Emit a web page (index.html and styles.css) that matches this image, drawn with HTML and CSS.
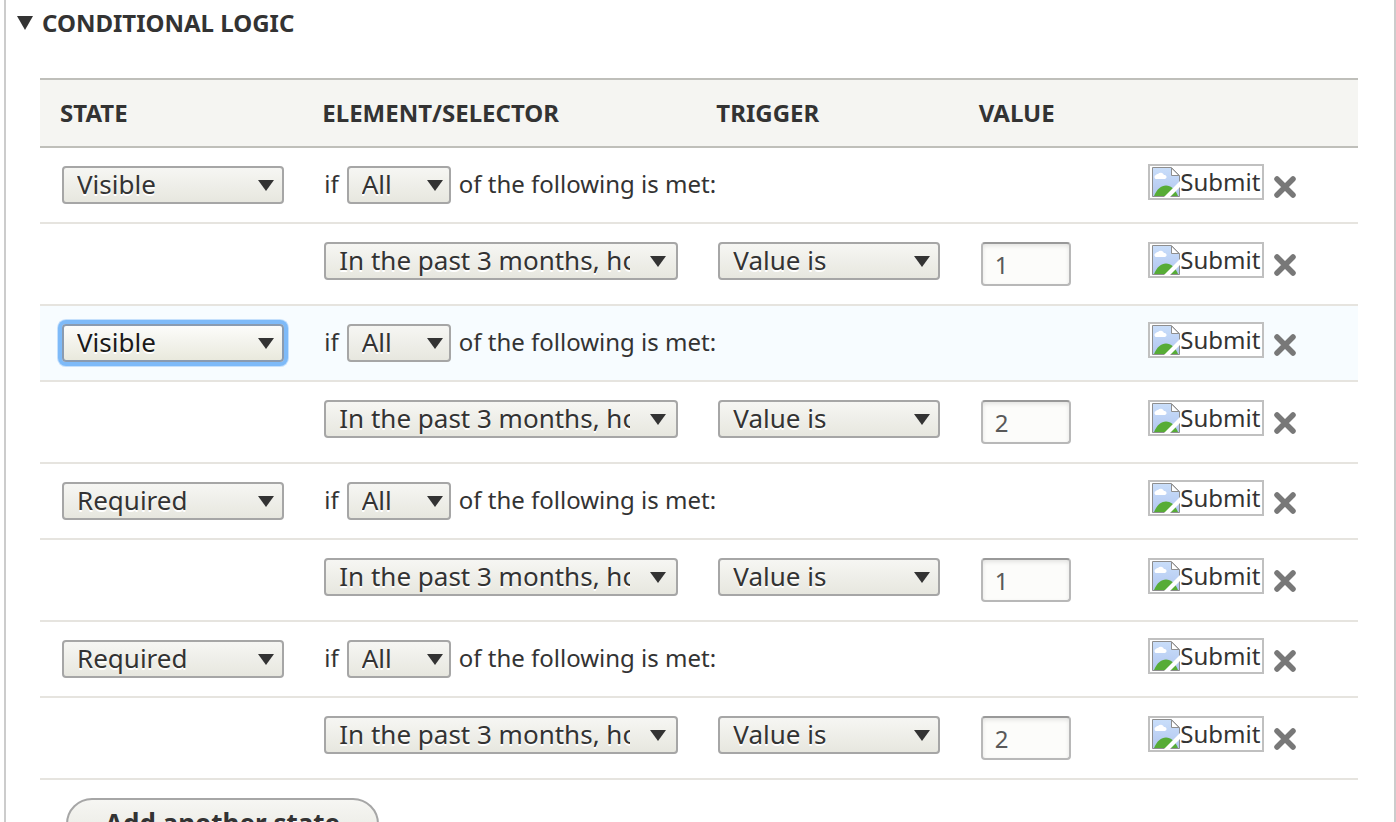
FILE: index.html
```
<!DOCTYPE html>
<html lang="en">
<head>
    <meta charset="utf-8">
    <title>Conditional logic</title>
    <link rel="stylesheet" href="styles.css">
</head>
<body>

    <!-- Shared icons -->
    <svg class="icon_defs" aria-hidden="true">
        <symbol id="broken" viewBox="0 0 28 30">
            <defs>
                <linearGradient id="sky" x1="0" y1="0" x2="0" y2="1">
                    <stop offset="0" stop-color="#c9defa"/>
                    <stop offset="1" stop-color="#b2c6ef"/>
                </linearGradient>
            </defs>
            <path d="M.5 .5H19.500L27.500 8.500V29.500H.5Z" fill="url(#sky)" stroke="#8e8e8e"/>
            <path d="M5 12a2 2 0 0 1-1-4a2 2 0 0 1 2-1a3.500 3.500 0 0 1 6 1a2 2 0 0 1 1 4Z" fill="#fff"/>
            <path d="M2 29C5 22 9 18.500 14 18.500C19 18.500 23 22 26 29Z" fill="#57ac36"/>
            <path d="M19.500 1V8.500H27Z" fill="#fff" stroke="#8e8e8e"/>
            <path d="M28 14V20L18 30H12Z" fill="#fff"/>
        </symbol>
        <symbol id="cross" viewBox="0 0 24 24">
            <path d="M4 4L20 20M20 4L4 20" stroke="#787878" stroke-width="5.500" stroke-linecap="round"/>
        </symbol>
    </svg>

    <details class="fieldset" open>
        <summary>
            <svg class="arrow" width="16" height="14" viewBox="0 0 16 14"><path d="M0 0H16L8 14Z" fill="#333"/></svg>
            Conditional logic
        </summary>

        <table class="states">
            <colgroup>
                <col class="col_state">
                <col class="col_selector">
                <col class="col_trigger">
                <col class="col_value">
                <col>
            </colgroup>
            <thead>
                <tr>
                    <th>State</th>
                    <th>Element/Selector</th>
                    <th>Trigger</th>
                    <th>Value</th>
                    <td></td>
                </tr>
            </thead>
            <tbody>
                <tr class="state">
                    <td><select class="medium" aria-label="State"><option>Visible</option><option>Required</option></select></td>
                    <td colspan="3">
                        <label class="operator">if <select class="small"><option>All</option><option>Any</option></select> of the following is met:</label>
                    </td>
                    <td class="ops">
                        <div class="buttons">
                            <button class="add"><svg width="28" height="30"><use href="#broken"/></svg>Submit</button>
                            <button class="remove" aria-label="Remove"><svg width="24" height="24"><use href="#cross"/></svg></button>
                        </div>
                    </td>
                </tr>
                <tr class="condition">
                    <td></td>
                    <td><select class="large" aria-label="Element"><option>In the past 3 months, how often</option></select></td>
                    <td><select class="medium" aria-label="Trigger"><option>Value is</option></select></td>
                    <td><input class="value" type="text" value="1" aria-label="Value"></td>
                    <td class="ops">
                        <div class="buttons">
                            <button class="add"><svg width="28" height="30"><use href="#broken"/></svg>Submit</button>
                            <button class="remove" aria-label="Remove"><svg width="24" height="24"><use href="#cross"/></svg></button>
                        </div>
                    </td>
                </tr>
                <tr class="state active">
                    <td><select class="medium focused" aria-label="State"><option>Visible</option><option>Required</option></select></td>
                    <td colspan="3">
                        <label class="operator">if <select class="small"><option>All</option><option>Any</option></select> of the following is met:</label>
                    </td>
                    <td class="ops">
                        <div class="buttons">
                            <button class="add"><svg width="28" height="30"><use href="#broken"/></svg>Submit</button>
                            <button class="remove" aria-label="Remove"><svg width="24" height="24"><use href="#cross"/></svg></button>
                        </div>
                    </td>
                </tr>
                <tr class="condition">
                    <td></td>
                    <td><select class="large" aria-label="Element"><option>In the past 3 months, how often</option></select></td>
                    <td><select class="medium" aria-label="Trigger"><option>Value is</option></select></td>
                    <td><input class="value" type="text" value="2" aria-label="Value"></td>
                    <td class="ops">
                        <div class="buttons">
                            <button class="add"><svg width="28" height="30"><use href="#broken"/></svg>Submit</button>
                            <button class="remove" aria-label="Remove"><svg width="24" height="24"><use href="#cross"/></svg></button>
                        </div>
                    </td>
                </tr>
                <tr class="state">
                    <td><select class="medium" aria-label="State"><option>Required</option><option>Visible</option></select></td>
                    <td colspan="3">
                        <label class="operator">if <select class="small"><option>All</option><option>Any</option></select> of the following is met:</label>
                    </td>
                    <td class="ops">
                        <div class="buttons">
                            <button class="add"><svg width="28" height="30"><use href="#broken"/></svg>Submit</button>
                            <button class="remove" aria-label="Remove"><svg width="24" height="24"><use href="#cross"/></svg></button>
                        </div>
                    </td>
                </tr>
                <tr class="condition">
                    <td></td>
                    <td><select class="large" aria-label="Element"><option>In the past 3 months, how often</option></select></td>
                    <td><select class="medium" aria-label="Trigger"><option>Value is</option></select></td>
                    <td><input class="value" type="text" value="1" aria-label="Value"></td>
                    <td class="ops">
                        <div class="buttons">
                            <button class="add"><svg width="28" height="30"><use href="#broken"/></svg>Submit</button>
                            <button class="remove" aria-label="Remove"><svg width="24" height="24"><use href="#cross"/></svg></button>
                        </div>
                    </td>
                </tr>
                <tr class="state">
                    <td><select class="medium" aria-label="State"><option>Required</option><option>Visible</option></select></td>
                    <td colspan="3">
                        <label class="operator">if <select class="small"><option>All</option><option>Any</option></select> of the following is met:</label>
                    </td>
                    <td class="ops">
                        <div class="buttons">
                            <button class="add"><svg width="28" height="30"><use href="#broken"/></svg>Submit</button>
                            <button class="remove" aria-label="Remove"><svg width="24" height="24"><use href="#cross"/></svg></button>
                        </div>
                    </td>
                </tr>
                <tr class="condition">
                    <td></td>
                    <td><select class="large" aria-label="Element"><option>In the past 3 months, how often</option></select></td>
                    <td><select class="medium" aria-label="Trigger"><option>Value is</option></select></td>
                    <td><input class="value" type="text" value="2" aria-label="Value"></td>
                    <td class="ops">
                        <div class="buttons">
                            <button class="add"><svg width="28" height="30"><use href="#broken"/></svg>Submit</button>
                            <button class="remove" aria-label="Remove"><svg width="24" height="24"><use href="#cross"/></svg></button>
                        </div>
                    </td>
                </tr>
            </tbody>
        </table>

        <button class="add_state">Add another state</button>
    </details>

</body>
</html>
```
FILE: styles.css
```
* {
    box-sizing: border-box;
}

body {
    margin: 0 0 0 4px;
    background: #fff;
    color: #333;
    font-family: "Noto Sans", "Open Sans", sans-serif;
    font-size: 24px;
    line-height: 36px;
}

.icon_defs {
    position: absolute;
    width: 0;
    height: 0;
}

.fieldset {
    border: solid #ccc;
    border-width: 0 2px;
    padding: 5px 36px 24px 34px;
}

summary {
    display: flex;
    align-items: center;
    gap: 9px;
    margin: 0 0 37px -23px;
    font-weight: 700;
    text-transform: uppercase;
    list-style: none;
}

.arrow {
    flex: none;
}

/*States table.*/
.states {
    width: 100%;
    table-layout: fixed;
    border-collapse: separate;
    border-spacing: 0;
}

.col_state,
.col_trigger {
    width: 19.9%;
}

.col_selector {
    width: 29.9%;
}

.col_value {
    width: 12.8%;
}

thead th,
thead td {
    height: 70px;
    padding: 0 20px;
    border: solid #bfbfba;
    border-width: 2px 0;
    background: #f5f5f2;
    font-weight: 700;
    text-align: left;
    text-transform: uppercase;
}

tbody td {
    padding: 18px 22px;
    border-bottom: 2px solid #e6e4df;
    vertical-align: top;
}

tbody .ops {
    padding-left: 21px;
}

.state td {
    height: 76px;
}

.state .ops {
    padding-top: 16px;
    padding-bottom: 16px;
}

.condition td {
    height: 82px;
}

.active td {
    background: #f7fcff;
}

/*Form controls.*/
select {
    display: block;
    appearance: none;
    height: 38px;
    margin: 0;
    padding: 0 40px 2px 13px;
    border: 2px solid #a6a6a6;
    border-radius: 4px;
    background: url("data:image/svg+xml,%3Csvg xmlns='http://www.w3.org/2000/svg' width='16' height='11'%3E%3Cpath d='M0 0H16L8 11Z' fill='%23333'/%3E%3C/svg%3E") no-repeat right 8px center,
                linear-gradient(#f6f6f3, #e7e7df);
    color: #333;
    font: 26px/32px "Noto Sans", "Open Sans", sans-serif;
    text-shadow: 0 2px #fff;
}

.small {
    width: 104px;
    padding-right: 28px;
    background-position: right 6px center, 0 0;
}

.medium {
    width: 222px;
}

.large {
    width: 354px;
    padding-right: 46px;
    background-position: right 10px center, 0 0;
}

.focused {
    background-image: url("data:image/svg+xml,%3Csvg xmlns='http://www.w3.org/2000/svg' width='16' height='11'%3E%3Cpath d='M0 0H16L8 11Z' fill='%23333'/%3E%3C/svg%3E"),
                      linear-gradient(#fcfcfa, #e9e9dd);
    border-color: #8a9bb0;
    color: #1a1a1a;
    box-shadow: 0 0 0 4px #7ebaf8, 0 0 0 5px #c5e0fc;
}

.operator {
    display: flex;
    align-items: flex-start;
    gap: 8px;
}

.operator .small {
    flex: none;
}

.value {
    display: block;
    width: 90px;
    height: 44px;
    padding: 0 12px;
    border: 2px solid #b8b8b8;
    border-top-color: #999;
    border-radius: 4px;
    background: #fcfcfa;
    box-shadow: inset 0 2px 4px rgba(0, 0, 0, .1);
    color: #595959;
    font: 24px "Noto Sans", "Open Sans", sans-serif;
}

.buttons {
    display: flex;
    align-items: center;
    gap: 9px;
}

.add {
    display: flex;
    align-items: center;
    width: 116px;
    height: 36px;
    padding: 0 2px;
    border: 2px solid #c0c0c0;
    background: #fff;
    color: #333;
    font: 24px/30px "Noto Sans", "Open Sans", sans-serif;
}

.add svg {
    flex: none;
}

.remove {
    display: block;
    height: 34px;
    padding: 10px 0 0;
    border: 0;
    background: none;
}

.remove svg {
    display: block;
}

.add_state {
    display: block;
    height: 52px;
    margin: 18px 0 0 26px;
    padding: 0 37px 2px;
    border: 2px solid #a6a6a6;
    border-radius: 26px;
    background: linear-gradient(#f6f6f3, #e7e7df);
    color: #333;
    font: 700 26px "Noto Sans", "Open Sans", sans-serif;
    text-shadow: 0 2px #fff;
}
```
